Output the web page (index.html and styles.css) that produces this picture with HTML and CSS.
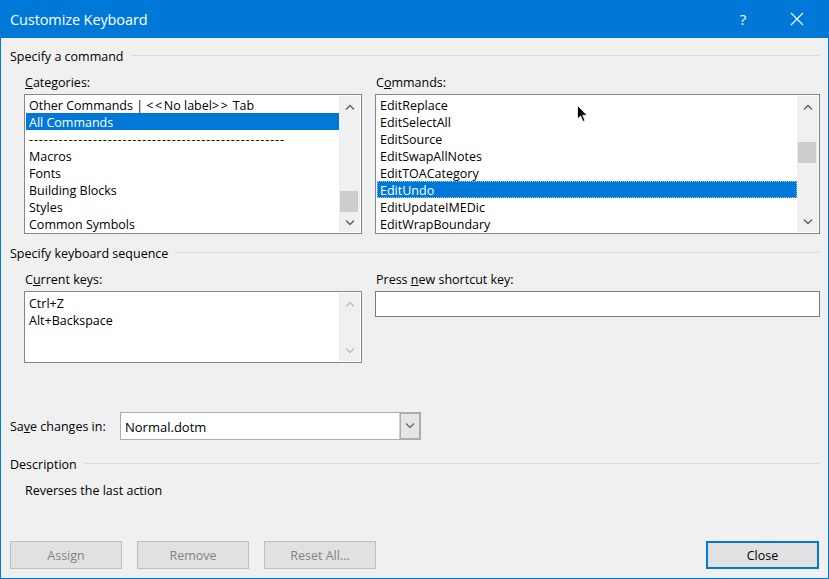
FILE: index.html
```html
<!DOCTYPE html>
<html>
<head>
<meta charset="utf-8">
<title>Customize Keyboard</title>
<link rel="stylesheet" href="styles.css">
</head>
<body>
<div class="window">
  <div class="titlebar">
    <span class="title">Customize Keyboard</span>
    <span class="tb-help">?</span>
    <span class="tb-close">
      <svg width="14" height="14" viewBox="0 0 14 14"><path d="M1 1 L13 13 M13 1 L1 13" stroke="#fff" stroke-width="1.1" fill="none"/></svg>
    </span>
  </div>
  <div class="content">
    <div class="group-header"><span class="gh-text">Specify a command</span><span class="rule"></span></div>
    <div class="two-col">
      <div class="field">
        <div class="label"><u>C</u>ategories:</div>
        <div class="listbox tall">
          <ul class="items">
            <li>Other Commands | <span class="wide">&lt;&lt;</span>No label<span class="wide">&gt;&gt;</span> Tab</li>
            <li class="sel">All Commands</li>
            <li class="dashes">----------------------------------------------------</li>
            <li>Macros</li>
            <li>Fonts</li>
            <li>Building Blocks</li>
            <li>Styles</li>
            <li>Common Symbols</li>
          </ul>
          <div class="vscroll">
            <div class="sb-btn"><svg width="10" height="6" viewBox="0 0 10 6"><path d="M1 5.5 L5 1.5 L9 5.5" stroke="#606060" stroke-width="1.4" fill="none"/></svg></div>
            <div class="sb-track"><div class="thumb" style="margin-top:74px"></div></div>
            <div class="sb-btn"><svg width="10" height="6" viewBox="0 0 10 6"><path d="M1 0.5 L5 4.5 L9 0.5" stroke="#606060" stroke-width="1.4" fill="none"/></svg></div>
          </div>
        </div>
      </div>
      <div class="field">
        <div class="label">C<u>o</u>mmands:</div>
        <div class="listbox tall">
          <ul class="items">
            <li>EditReplace</li>
            <li>EditSelectAll</li>
            <li>EditSource</li>
            <li>EditSwapAllNotes</li>
            <li>EditTOACategory</li>
            <li class="sel focus">EditUndo</li>
            <li>EditUpdateIMEDic</li>
            <li>EditWrapBoundary</li>
          </ul>
          <div class="vscroll">
            <div class="sb-btn"><svg width="10" height="6" viewBox="0 0 10 6"><path d="M1 5.5 L5 1.5 L9 5.5" stroke="#606060" stroke-width="1.4" fill="none"/></svg></div>
            <div class="sb-track"><div class="thumb" style="margin-top:25px"></div></div>
            <div class="sb-btn"><svg width="10" height="6" viewBox="0 0 10 6"><path d="M1 0.5 L5 4.5 L9 0.5" stroke="#606060" stroke-width="1.4" fill="none"/></svg></div>
          </div>
          <svg class="cursor" width="12" height="19" viewBox="0 0 12 19"><path d="M0.5 0.5 L0.5 14 L3.6 11 L6 16.5 L8 15.6 L5.7 10.3 L10 10.3 Z" fill="#000" stroke="#fff" stroke-width="0.8"/></svg>
        </div>
      </div>
    </div>

    <div class="group-header gh2"><span class="gh-text">Specify keyboard sequence</span><span class="rule"></span></div>
    <div class="two-col">
      <div class="field">
        <div class="label">C<u>u</u>rrent keys:</div>
        <div class="listbox short">
          <ul class="items">
            <li>Ctrl+Z</li>
            <li>Alt+Backspace</li>
          </ul>
          <div class="vscroll disabled">
            <div class="sb-btn"><svg width="10" height="6" viewBox="0 0 10 6"><path d="M1 5.5 L5 1.5 L9 5.5" stroke="#c0c0c0" stroke-width="1.4" fill="none"/></svg></div>
            <div class="sb-track"></div>
            <div class="sb-btn"><svg width="10" height="6" viewBox="0 0 10 6"><path d="M1 0.5 L5 4.5 L9 0.5" stroke="#c0c0c0" stroke-width="1.4" fill="none"/></svg></div>
          </div>
        </div>
      </div>
      <div class="field">
        <div class="label">Press <u>n</u>ew shortcut key:</div>
        <div class="textbox"></div>
      </div>
    </div>

    <div class="save-row">
      <span class="save-label">Sa<u>v</u>e changes in:</span>
      <div class="combo">
        <span class="combo-text">Normal.dotm</span>
        <span class="combo-btn"><svg width="10" height="6" viewBox="0 0 10 6"><path d="M1 0.5 L5 4.5 L9 0.5" stroke="#606060" stroke-width="1.2" fill="none"/></svg></span>
      </div>
    </div>

    <div class="group-header gh3"><span class="gh-text">Description</span><span class="rule"></span></div>
    <div class="desc">Reverses the last action</div>

    <div class="buttons">
      <button class="btn disabled">Assign</button>
      <button class="btn disabled">Remove</button>
      <button class="btn disabled">Reset All...</button>
      <span class="spacer"></span>
      <button class="btn default">Close</button>
    </div>
  </div>
</div>
</body>
</html>
```

FILE: styles.css
```css
* { box-sizing: border-box; }
html, body { margin: 0; padding: 0; }
body {
  width: 829px;
  height: 579px;
  overflow: hidden;
  background: #f0f0f0;
  font-family: "Segoe UI", "Open Sans", "Noto Sans", sans-serif;
  font-size: 12.5px;
  color: #000;
}
.window {
  width: 829px;
  height: 579px;
  border: 1px solid #0078d7;
  border-top: none;
  background: #f0f0f0;
  display: flex;
  flex-direction: column;
}
.titlebar {
  height: 38px;
  margin: 0 -1px;
  background: #0078d7;
  color: #fff;
  display: flex;
  align-items: center;
  flex-shrink: 0;
}
.title {
  font-size: 14.5px;
  margin-left: 10px;
  flex: 1;
  letter-spacing: -0.1px;
}
.tb-help {
  font-size: 15px;
  width: 20px;
  text-align: center;
  margin-right: 37px;
}
.tb-close {
  width: 14px;
  height: 14px;
  margin-right: 25px;
  display: flex;
}
.content {
  padding: 10px 9px 0 9px;
  display: flex;
  flex-direction: column;
  flex: 1;
}
.group-header {
  display: flex;
  align-items: center;
  height: 16px;
}
.gh-text {
  white-space: nowrap;
  margin-right: 7px;
  height: 16px;
  line-height: 14px;
  padding-top: 2px;
}
.rule { flex: 1; height: 1px; background: #dcdcdc; margin-top: -1px; }
.gh2 { margin-top: 11px; }
.gh3 { margin-top: 16px; }
.two-col {
  display: grid;
  grid-template-columns: 338px 445px;
  column-gap: 13px;
  padding-left: 14px;
}
.label {
  margin-top: 10px;
  height: 16px;
  line-height: 14px;
  padding-top: 2px;
  margin-bottom: 4px;
  padding-left: 1px;
}
u { text-decoration: underline; text-underline-offset: 1px; }
.listbox {
  position: relative;
  background: #fff;
  border: 1px solid #828790;
  padding: 1px;
  display: flex;
}
.listbox.tall { height: 140px; }
.listbox.short { height: 72px; }
.items {
  list-style: none;
  margin: 0;
  padding: 0;
  flex: 1;
  overflow: hidden;
}
.items li {
  height: 17px;
  line-height: 15px;
  padding-top: 2px;
  padding-left: 3px;
  white-space: nowrap;
  overflow: hidden;
}
.items li.sel { background: #0078d7; color: #fff; }
.items li.focus { outline: 1px dotted #9ec9f0; outline-offset: -1px; }
.items li.dashes { letter-spacing: 0.9px; }
.wide { letter-spacing: 1.6px; }
.short .items { padding-top: 1px; }
.vscroll {
  width: 21px;
  background: #f0f0f0;
  display: flex;
  flex-direction: column;
}
.sb-btn {
  height: 21px;
  display: flex;
  align-items: center;
  justify-content: center;
  flex-shrink: 0;
}
.sb-track { flex: 1; }
.thumb {
  height: 21px;
  margin-left: 1px;
  margin-right: 2px;
  background: #cdcdcd;
}
.cursor {
  position: absolute;
  left: 201px;
  top: 10px;
}
.textbox {
  height: 26px;
  background: #fff;
  border: 1px solid #7a7a7a;
}
.save-row {
  margin-top: 49px;
  display: flex;
  align-items: center;
  height: 28px;
}
.save-label { width: 110px; padding-top: 1px; }
.combo {
  width: 301px;
  height: 28px;
  border: 1px solid #adadad;
  background: #fff;
  display: flex;
}
.combo-text { flex: 1; line-height: 26px; padding-left: 4px; padding-top: 1px; font-size: 13px; }
.combo-btn {
  width: 21px;
  background: #e5e5e5;
  border-left: 1px solid #d0d0d0;
  box-shadow: inset 0 0 0 1px #adadad;
  display: flex;
  align-items: center;
  justify-content: center;
}
.desc {
  margin-top: 10px;
  padding-left: 15px;
  height: 16px;
  line-height: 14px;
  padding-top: 2px;
}
.buttons {
  margin-top: 43px;
  display: flex;
  gap: 15px;
}
.spacer { flex: 1; }
.btn {
  width: 112px;
  height: 28px;
  font-family: inherit;
  font-size: 12.5px;
  background: #e1e1e1;
  border: 1px solid #adadad;
  color: #000;
  padding: 0;
}
.btn.disabled { background: #e1e1e1; border-color: #bfbfbf; color: #838383; }
.btn.default { width: 113px; border: 2px solid #0078d7; }
```
